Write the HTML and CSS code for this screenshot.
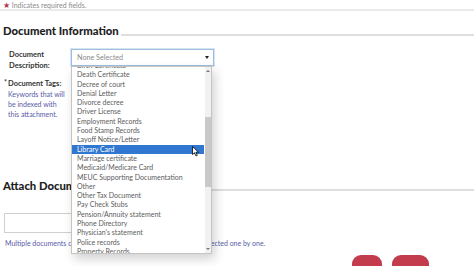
FILE: index.html
```html
<!DOCTYPE html>
<html lang="en">
<head>
  <meta charset="UTF-8">
  <title>Document Information</title>
  <link rel="stylesheet" href="styles.css">
</head>
<body>
<div class="page">
  <div class="note"><span class="star">&#9733;</span> Indicates required fields.</div>

  <h2 class="section-title">Document Information</h2>

  <div class="form-row">
    <label class="field-label">Document<br>Description:</label>
    <div class="select-wrap">
      <div class="select-box">
        <span class="placeholder">None Selected</span>
        <span class="caret"></span>
      </div>
      <div class="dropdown">
        <ul class="options">
          <li>Birth Certificate</li>
          <li>Death Certificate</li>
          <li>Decree of court</li>
          <li>Denial Letter</li>
          <li>Divorce decree</li>
          <li>Driver License</li>
          <li>Employment Records</li>
          <li>Food Stamp Records</li>
          <li>Layoff Notice/Letter</li>
          <li class="active">Library Card</li>
          <li>Marriage certificate</li>
          <li>Medicaid/Medicare Card</li>
          <li>MEUC Supporting Documentation</li>
          <li>Other</li>
          <li>Other Tax Document</li>
          <li>Pay Check Stubs</li>
          <li>Pension/Annuity statement</li>
          <li>Phone Directory</li>
          <li>Physician's statement</li>
          <li>Police records</li>
          <li>Property Records</li>
        </ul>
        <div class="scrollbar">
          <span class="arrow up"></span>
          <span class="thumb"></span>
          <span class="arrow down"></span>
        </div>
        <svg class="cursor" width="8" height="11" viewBox="0 0 8 11">
          <path d="M0.5 0.5 L0.5 8.5 L2.5 6.7 L4 10 L5.3 9.4 L3.9 6.2 L6.6 6.2 Z" fill="#fff" stroke="#000" stroke-width="0.8" stroke-linejoin="round"/>
        </svg>
      </div>
    </div>
  </div>

  <div class="form-row tags-row">
    <div class="field-label">
      <span class="req">*</span>Document Tags:
      <p class="help">Keywords that will<br>be indexed with<br>this attachment.</p>
    </div>
  </div>

  <h2 class="section-title attach">Attach Documents</h2>

  <input class="file-input" type="text">
  <p class="help wide">Multiple documents can be uploaded, but each of them must be selected one by one.</p>

  <div class="actions">
    <button class="btn btn-add">Add</button>
    <button class="btn btn-save">Save</button>
  </div>
</div>
</body>
</html>
```

FILE: styles.css
```css
body {
  margin: 0;
  background: #fff;
  font-family: Lato, "Open Sans", sans-serif;
  color: #333;
  overflow: hidden;
}

.page {
  padding-left: 3px;
}

.note {
  height: 9px;
  font-size: 7px;
  line-height: 10px;
  color: #8a8a8a;
  border-bottom: 2px solid #ebebeb;
  margin-left: -3px;
  padding-left: 3px;
}

.star {
  color: #b8344a;
  font-size: 7.5px;
}

.section-title {
  display: flex;
  margin: 13px 0 0;
  font-size: 11.3px;
  line-height: 14px;
  font-weight: 900;
  color: #1e1e1e;
}

.section-title::after {
  content: '';
  flex: 1;
  height: 2px;
  margin-left: 2px;
  align-self: flex-end;
  margin-bottom: 2px;
  background: #dedede;
}

.section-title.attach {
  margin-top: 60px;
}

.form-row {
  display: grid;
  grid-template-columns: 68px 143px;
  margin-top: 11px;
}

.tags-row {
  margin-top: 6px;
}

.field-label {
  padding-left: 6px;
  font-size: 7.5px;
  line-height: 11px;
  font-weight: 700;
  color: #333;
}

.tags-row .field-label {
  padding-left: 1px;
  line-height: 10px;
  white-space: nowrap;
}

.req {
  font-size: 7px;
  margin-right: 1px;
  vertical-align: 1px;
}

.help {
  margin: 0;
  font-size: 7px;
  line-height: 10px;
  font-weight: 400;
  color: #5a5aa8;
  padding-left: 4px;
}

.help.wide {
  padding-left: 2px;
  margin-top: 5px;
  white-space: nowrap;
}

.select-wrap {
  position: relative;
}

.select-box {
  height: 15px;
  display: flex;
  align-items: center;
  justify-content: space-between;
  padding: 0 4px 0 5px;
  border: 1px solid #9fbedf;
  box-shadow: 0 0 0 1px #d6e4f2;
  font-size: 7.2px;
  color: #8a8a8a;
}

.caret {
  width: 0;
  height: 0;
  border-left: 2px solid transparent;
  border-right: 2px solid transparent;
  border-top: 3px solid #222;
}

.dropdown {
  position: absolute;
  top: 17px;
  left: 0;
  width: 139px;
  height: 186px;
  border: 1px solid #c4c4c4;
  background: #fff;
  overflow: hidden;
  box-shadow: 3px 5px 10px rgba(0, 0, 0, .18);
  z-index: 2;
}

.options {
  list-style: none;
  margin: -6px 0 0;
  padding: 0;
  font-size: 7px;
  line-height: 9.3px;
  color: #5c5c5c;
}

.options li {
  padding-left: 5px;
  margin-right: 7px;
  white-space: nowrap;
}

.options li.active {
  background: #2f77d1;
  color: #fff;
}

.scrollbar {
  position: absolute;
  top: 0;
  right: 0;
  width: 6px;
  height: 100%;
  background: #f1f1f1;
}

.thumb {
  position: absolute;
  left: 0;
  right: 0;
  top: 50px;
  height: 70px;
  background: #c9c9c9;
}

.arrow {
  position: absolute;
  left: 1px;
  width: 0;
  height: 0;
  border-left: 2px solid transparent;
  border-right: 2px solid transparent;
}

.arrow.up {
  top: 3px;
  border-bottom: 2px solid #777;
}

.arrow.down {
  bottom: 3px;
  border-top: 2px solid #777;
}

.cursor {
  position: absolute;
  left: 120px;
  top: 79px;
}

.file-input {
  display: block;
  margin: 20px 0 0 1px;
  width: 200px;
  height: 20px;
  box-sizing: border-box;
  border: 1px solid #cfcfcf;
  outline: none;
}

.actions {
  display: flex;
  justify-content: flex-end;
  gap: 10px;
  padding-right: 45px;
  margin-top: 7px;
}

.btn {
  height: 22px;
  padding: 0;
  border: 0;
  border-radius: 9px;
  background: #c23c4d;
  color: #f3d6da;
  font: 700 8px/28px Lato, sans-serif;
}

.btn-add {
  width: 30px;
}

.btn-save {
  width: 37px;
}
```
